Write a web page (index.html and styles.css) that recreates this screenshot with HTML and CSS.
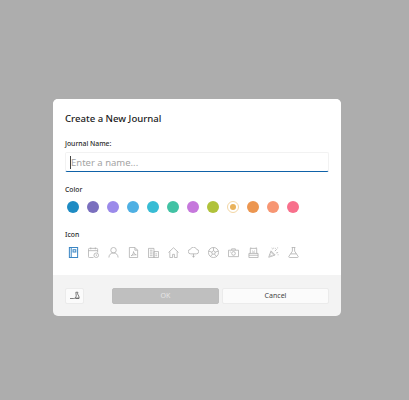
FILE: index.html
```html
<html>

<head>
    <link rel="stylesheet" href="styles.css">
</head>

<body>
    <div class='dialog'>
        <div class='main'>
            <h2 class='title'>Create a New Journal</h2>
            <div class='label name-label'>Journal Name:</div>
            <div class='input'><span class='caret'></span><span class='placeholder'>Enter a name...</span></div>
            <div class='label color-label'>Color</div>
            <div class='row colors'>
                <div class='dot' style='background:#1e8bc3'></div>
                <div class='dot' style='background:#7a6fbe'></div>
                <div class='dot' style='background:#9b8aea'></div>
                <div class='dot' style='background:#4fb0e3'></div>
                <div class='dot' style='background:#38bcd4'></div>
                <div class='dot' style='background:#42c2a4'></div>
                <div class='dot' style='background:#c678dc'></div>
                <div class='dot' style='background:#b0c23a'></div>
                <div class='dot selected'><div class='inner'></div></div>
                <div class='dot' style='background:#ec9650'></div>
                <div class='dot' style='background:#f79673'></div>
                <div class='dot' style='background:#f8708c'></div>
            </div>
            <div class='label icon-label'>Icon</div>
            <div class='row icons'>
                <svg class='icon active' viewBox='0 0 12 12'><path d='M1.500 .5h9v11h-9zM3.500 .5v11M5.500 3h3v2.500h-3z'/></svg>
                <svg class='icon' viewBox='0 0 12 12'><path d='M6 11.500H1.500a1 1 0 0 1-1-1v-8a1 1 0 0 1 1-1h8a1 1 0 0 1 1 1V6M.5 4h10M3 .5v2M8 .5v2'/><circle cx='9' cy='9' r='2.500'/><path d='M9 8v1.200l.8.5'/></svg>
                <svg class='icon' viewBox='0 0 12 12'><circle cx='6' cy='3.500' r='3'/><path d='M1 11.500c0-3 2-5 5-5s5 2 5 5'/></svg>
                <svg class='icon' viewBox='0 0 12 12'><path d='M1.500 .5h6l3 3v8h-9zM7.500 .5v3h3M3.500 9.500c2-1 2.500-3 2.500-4.500.5 2 1.500 3 3 3.500-1.500 0-4 0-5.500 1z'/></svg>
                <svg class='icon' viewBox='0 0 12 12'><path d='M.5 11.500v-10h6v10zM6.500 5h5v6.500h-5zM2 3.500h3M2 5.500h3M2 7.500h3M2 9.500h3M8 7.500h2M8 9.500h2'/></svg>
                <svg class='icon' viewBox='0 0 12 12'><path d='M.5 6L6 .8 11.500 6M2 5v6.500h3V8h2v3.500h3V5'/></svg>
                <svg class='icon' viewBox='0 0 12 12'><path d='M3 7.500a2.500 2.500 0 0 1-.3-5 3.500 3.500 0 0 1 6.600 0 2.500 2.500 0 0 1-.3 5zM6 7.500v4M4.500 9.500L6 11l1.500-1.500'/></svg>
                <svg class='icon' viewBox='0 0 12 12'><circle cx='6' cy='6' r='5.500'/><path d='M6 4l2 1.500-.8 2.300H4.800L4 5.500zM6 .5V4M8 5.500l3.300-1M7.200 7.800l2 2.500M4.800 7.800l-2 2.500M4 5.500L.7 4.500'/></svg>
                <svg class='icon' viewBox='0 0 12 12'><path d='M.5 3.500h11v7H.5zM4 3.500V2h4v1.500'/><circle cx='6' cy='7' r='2'/><path d='M2 5.500h1'/></svg>
                <svg class='icon' viewBox='0 0 12 12'><path d='M2.500 7V1.500h7V7M1 7h10v4.500H1zM4.500 4h.5M7 4h.5M4.500 5.500h3M1 9h10M3 1.500V.5M9 1.500V.5'/></svg>
                <svg class='icon' viewBox='0 0 12 12'><path d='M.8 11.200l2.500-7 4.500 4.500zM5 2.500L6 .8M7.500 4.500l2-2M9 6.500l2-.5M10 1h1M7.500 1.500h1M10.500 8.500h1M4 1h.5M2 8l2 2M3 5.500l3.500 3.500'/></svg>
                <svg class='icon' viewBox='0 0 12 12'><path d='M4 .5h4M4.800 .5v4L1 10.200c-.4.700 0 1.300.8 1.300h8.400c.8 0 1.200-.6.800-1.300L7.200 4.500v-4M3 7.500h6'/></svg>
            </div>
        </div>
        <div class='footer'>
            <button class='btn help'>
                <svg class='help-icon' viewBox='0 0 14 12'><path d='M1 9h4.500c1 0 1.300-.3 1.500-.8M8 1.500h2.500l-.5 2 1.500 2.500.5 2.500H7.500l1-2.500zM7.500 9h4.500'/></svg>
            </button>
            <button class='btn ok'>OK</button>
            <button class='btn cancel'>Cancel</button>
        </div>
    </div>
</body>

</html>
```

FILE: styles.css
```css
body,
html {
    margin: 0;
    height: 100%;
}

body {
    background: #adadad;
    padding: 99px 0 0 53px;
    box-sizing: border-box;
    overflow: hidden;
    font-family: "Noto Sans", "Open Sans", sans-serif;
}

.dialog {
    width: 288px;
    height: 217px;
    border-radius: 5px;
    overflow: hidden;
    background: #f3f3f3;
    display: flex;
    flex-direction: column;
}

.main {
    background: #fff;
    height: 176px;
    padding: 0 12px;
    box-sizing: border-box;
}

.title {
    margin: 0;
    padding-top: 13px;
    font-size: 9.6px;
    line-height: 14px;
    font-weight: 500;
    color: #1b1b1b;
}

.label {
    font-size: 6.8px;
    line-height: 10px;
    font-weight: 500;
    color: #2a2a2a;
}

.name-label {
    margin-top: 13px;
}

.input {
    margin-top: 3px;
    height: 20px;
    box-sizing: border-box;
    border: 1px solid #f2f2f2;
    border-bottom: 1px solid #0f62a8;
    border-radius: 2px;
    display: flex;
    align-items: center;
    padding-left: 4px;
}

.caret {
    width: 1px;
    height: 13px;
    background: #444;
}

.placeholder {
    font-size: 9.5px;
    color: #a3a3a3;
}

.color-label {
    margin-top: 13px;
}

.row {
    display: flex;
}

.colors {
    margin-top: 6px;
    gap: 8px;
    padding-left: 2px;
}

.dot {
    width: 12px;
    height: 12px;
    border-radius: 50%;
    display: flex;
    align-items: center;
    justify-content: center;
}

.selected {
    box-sizing: border-box;
    border: 1px solid #f3d6a4;
}

.inner {
    width: 6px;
    height: 6px;
    border-radius: 50%;
    background: #e9b25a;
}

.icon-label {
    margin-top: 17px;
}

.icons {
    margin-top: 7px;
    gap: 9px;
    padding-left: 3px;
}

.icon {
    width: 11px;
    height: 11px;
    fill: none;
    stroke: #a8a8a8;
    stroke-width: .8;
}

.icon.active {
    stroke: #3a86c4;
    stroke-width: 1.1;
}

.footer {
    flex: 1;
    display: flex;
    align-items: flex-start;
    padding: 13px 12px 0;
}

.btn {
    height: 16px;
    padding: 0;
    border-radius: 2px;
    font-family: inherit;
    font-size: 7px;
    line-height: 14px;
    border: 1px solid #ebebeb;
    background: #fbfbfb;
    color: #444;
}

.help {
    width: 19px;
    margin-right: 28px;
    display: flex;
    align-items: center;
    justify-content: center;
}

.help-icon {
    width: 12px;
    height: 10px;
    fill: none;
    stroke: #555;
    stroke-width: .9;
}

.ok {
    width: 107px;
    margin-right: 3px;
    background: #bfbfbf;
    border-color: #bdbdbd;
    color: #e6e6e6;
}

.cancel {
    width: 107px;
}
```
